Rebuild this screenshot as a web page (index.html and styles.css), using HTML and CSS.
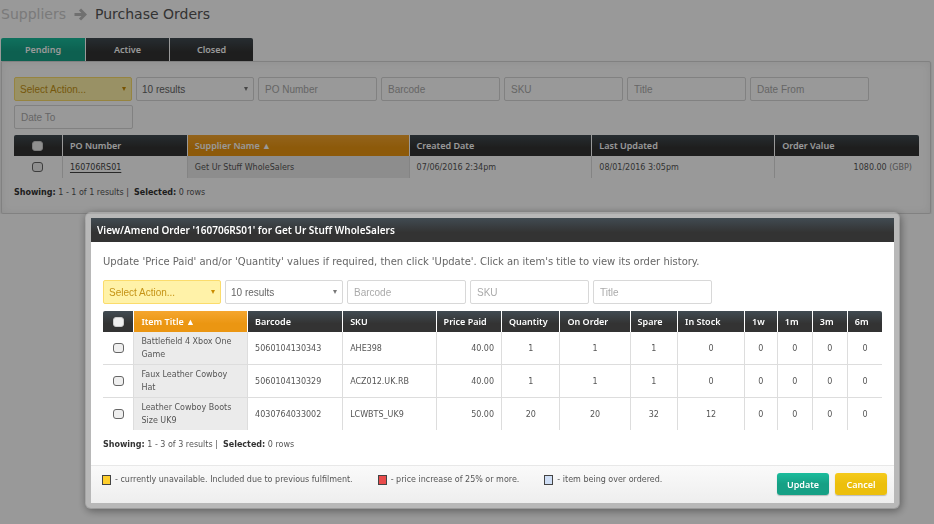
FILE: index.html
```
<!DOCTYPE html>
<html lang="en">
<head>
    <meta charset="UTF-8">
    <meta name="viewport" content="width=device-width, initial-scale=1.0">
    <title>Purchase Orders</title>
    <link rel="stylesheet" href="styles.css">
</head>
<body>
    <h1 class="page_title">
        <a href="#">Suppliers</a>
        <svg width="13" height="13" viewBox="0 0 13 13"><path d="M0.5 6.5H10M6 1.5L11 6.5L6 11.5" fill="none" stroke="currentColor" stroke-width="3"/></svg>
        Purchase Orders
    </h1>

    <div class="tabs">
        <button type="button" class="tab active">Pending</button>
        <button type="button" class="tab">Active</button>
        <button type="button" class="tab">Closed</button>
    </div>

    <div class="panel">
        <div class="filters">
            <div class="select action"><select aria-label="Action"><option>Select Action...</option></select></div>
            <div class="select"><select aria-label="Results per page"><option>10 results</option></select></div>
            <input type="text" placeholder="PO Number" aria-label="PO Number">
            <input type="text" placeholder="Barcode" aria-label="Barcode">
            <input type="text" placeholder="SKU" aria-label="SKU">
            <input type="text" placeholder="Title" aria-label="Title">
            <input type="text" placeholder="Date From" aria-label="Date From">
            <input type="text" placeholder="Date To" aria-label="Date To">
        </div>
        <table class="grid orders">
            <thead>
                <tr>
                    <th class="c_check"><input type="checkbox" aria-label="Select all orders"></th>
                    <th class="c_po">PO Number</th>
                    <th class="c_supplier sorted">Supplier Name ▲</th>
                    <th class="c_date">Created Date</th>
                    <th class="c_date">Last Updated</th>
                    <th class="c_value">Order Value</th>
                </tr>
            </thead>
            <tbody>
                <tr>
                    <td class="c_check"><input type="checkbox" aria-label="Select order 160706RS01"></td>
                    <td><a href="#">160706RS01</a></td>
                    <td class="sorted">Get Ur Stuff WholeSalers</td>
                    <td>07/06/2016 2:34pm</td>
                    <td>08/01/2016 3:05pm</td>
                    <td class="right">1080.00 <span class="currency">(GBP)</span></td>
                </tr>
            </tbody>
        </table>
        <p class="summary"><b>Showing:</b> 1 - 1 of 1 results | &nbsp;<b>Selected:</b> 0 rows</p>
    </div>

    <!-- popup -->
    <div class="overlay">
        <div class="modal" role="dialog" aria-labelledby="modal_title">
            <h2 class="modal_title" id="modal_title">View/Amend Order '160706RS01' for Get Ur Stuff WholeSalers</h2>
            <div class="modal_body">
                <p class="intro">Update 'Price Paid' and/or 'Quantity' values if required, then click 'Update'. Click an item's title to view its order history.</p>
                <div class="filters">
                    <div class="select action"><select aria-label="Item action"><option>Select Action...</option></select></div>
                    <div class="select"><select aria-label="Items per page"><option>10 results</option></select></div>
                    <input type="text" placeholder="Barcode" aria-label="Item barcode">
                    <input type="text" placeholder="SKU" aria-label="Item SKU">
                    <input type="text" placeholder="Title" aria-label="Item title">
                </div>
                <table class="grid items">
                    <colgroup>
                        <col class="i_check"><col class="i_title"><col class="i_barcode"><col class="i_sku"><col class="i_price"><col class="i_qty"><col class="i_order"><col class="i_spare"><col class="i_stock"><col class="i_week"><col class="i_month"><col class="i_month"><col class="i_month">
                    </colgroup>
                    <thead>
                        <tr>
                            <th class="c_check"><input type="checkbox" aria-label="Select all items"></th>
                            <th class="sorted">Item Title ▲</th>
                            <th>Barcode</th>
                            <th>SKU</th>
                            <th>Price Paid</th>
                            <th>Quantity</th>
                            <th>On Order</th>
                            <th>Spare</th>
                            <th>In Stock</th>
                            <th>1w</th>
                            <th>1m</th>
                            <th>3m</th>
                            <th>6m</th>
                        </tr>
                    </thead>
                    <tbody>
                        <tr>
                            <td class="c_check"><input type="checkbox" aria-label="Select Battlefield 4"></td>
                            <td class="sorted">Battlefield 4 Xbox One Game</td>
                            <td>5060104130343</td>
                            <td>AHE398</td>
                            <td class="right">40.00</td>
                            <td class="num">1</td>
                            <td class="num">1</td>
                            <td class="num">1</td>
                            <td class="num">0</td>
                            <td class="num">0</td>
                            <td class="num">0</td>
                            <td class="num">0</td>
                            <td class="num">0</td>
                        </tr>
                        <tr>
                            <td class="c_check"><input type="checkbox" aria-label="Select Cowboy Hat"></td>
                            <td class="sorted">Faux Leather Cowboy Hat</td>
                            <td>5060104130329</td>
                            <td>ACZ012.UK.RB</td>
                            <td class="right">40.00</td>
                            <td class="num">1</td>
                            <td class="num">1</td>
                            <td class="num">1</td>
                            <td class="num">0</td>
                            <td class="num">0</td>
                            <td class="num">0</td>
                            <td class="num">0</td>
                            <td class="num">0</td>
                        </tr>
                        <tr>
                            <td class="c_check"><input type="checkbox" aria-label="Select Cowboy Boots"></td>
                            <td class="sorted">Leather Cowboy Boots Size UK9</td>
                            <td>4030764033002</td>
                            <td>LCWBTS_UK9</td>
                            <td class="right">50.00</td>
                            <td class="num">20</td>
                            <td class="num">20</td>
                            <td class="num">32</td>
                            <td class="num">12</td>
                            <td class="num">0</td>
                            <td class="num">0</td>
                            <td class="num">0</td>
                            <td class="num">0</td>
                        </tr>
                    </tbody>
                </table>
                <p class="summary"><b>Showing:</b> 1 - 3 of 3 results | &nbsp;<b>Selected:</b> 0 rows</p>
            </div>
            <div class="modal_foot">
                <ul class="legend">
                    <li><i class="key yellow"></i>- currently unavailable. Included due to previous fulfilment.</li>
                    <li><i class="key red"></i>- price increase of 25% or more.</li>
                    <li><i class="key blue"></i>- item being over ordered.</li>
                </ul>
                <button type="button" class="btn update">Update</button>
                <button type="button" class="btn cancel">Cancel</button>
            </div>
        </div>
    </div>
</body>
</html>
```
FILE: styles.css
```
* {
    box-sizing: border-box;
}
body {
    margin: 0;
    padding: 4px 3px 0 1px;
    background-color: #fff;
    color: #555;
    font-family: "DejaVu Sans", Verdana, sans-serif;
    font-size: 8px;
    line-height: 13px;
}
h1, h2, p, ul {
    margin: 0;
    padding: 0;
    font-weight: normal;
}
.page_title {
    display: flex;
    align-items: center;
    gap: 8px;
    margin-bottom: 14px;
    font-size: 14px;
    line-height: 20px;
}
.page_title a {
    color: #ccc;
    text-decoration: none;
}
.page_title svg {
    color: #bbb;
}

/* tabs */
.tabs {
    display: flex;
    gap: 1px;
}
.tab {
    width: 83px;
    height: 23px;
    padding: 0;
    border: 0;
    background: linear-gradient(#414b52, #333 60%);
    color: #fff;
    font: 600 9px "Noto Sans", Tahoma, sans-serif;
}
.tab:first-child {
    width: 84px;
    border-radius: 2px 0 0 0;
}
.tab:last-child {
    border-radius: 0 2px 0 0;
}
.tab.active {
    background: linear-gradient(#1abc9c, #16a085 60%);
}
.panel {
    padding: 15px 11px 14px 12px;
    border: 1px solid #d8d8d8;
    border-radius: 0 2px 2px 2px;
    box-shadow: inset 0 0 8px #eee, 0 1px 2px #ccc;
}

/* filter boxes */
.filters {
    display: flex;
    flex-wrap: wrap;
    gap: 4px;
    margin-bottom: 6px;
}
.filters input, .filters select {
    display: block;
    height: 24px;
    border: 1px solid #d8d8d8;
    border-radius: 2px;
    background-color: #fff;
    color: #666;
    font: 10px "Liberation Sans", Arial, sans-serif;
}
.filters input {
    width: 119px;
    padding: 0 6px;
}
.filters input::placeholder {
    color: #aaa;
}
.select {
    position: relative;
    width: 118px;
}
.filters select {
    width: 100%;
    padding: 0 5px;
    appearance: none;
}
.select::after {
    content: "";
    position: absolute;
    top: 10px;
    right: 6px;
    border: 2px solid transparent;
    border-top: 4px solid #777;
    border-bottom: 0;
}
.action select {
    border-color: #fbdc6c;
    background-color: #fff2a8;
    color: #c59316;
}
.action::after {
    border-top-color: #c98b00;
}

/* tables */
.grid {
    width: 100%;
    border-collapse: separate;
    border-spacing: 0;
    table-layout: fixed;
}
.grid th {
    height: 21px;
    padding: 0 7px;
    border-left: 1px solid #fff;
    background: linear-gradient(#414b52, #333 60%);
    color: #fff;
    font: 600 9px "Noto Sans", Tahoma, sans-serif;
    text-align: left;
    white-space: nowrap;
}
.grid th.sorted {
    background: linear-gradient(#f5a62f, #eb9612 60%);
}
.grid th:first-child {
    border-left: 0;
    border-radius: 2px 0 0 0;
}
.grid th:last-child {
    border-radius: 0 2px 0 0;
}
.grid td {
    padding: 3px 7px;
    border-left: 1px solid #ddd;
}
.grid td:first-child {
    border-left: 0;
}
.grid tr + tr td {
    border-top: 1px solid #ddd;
}
.grid td.sorted {
    background-color: #ebebeb;
}
.grid a {
    color: #444;
    text-underline-offset: 2px;
}
.grid .c_check {
    padding: 0;
    text-align: center;
}
.grid input {
    display: block;
    width: 11px;
    height: 10px;
    margin: 0 auto;
    border: 1px solid #666;
    border-radius: 3px;
    background-color: #efefef;
    appearance: none;
}
.grid th input {
    border-color: #ccc;
}
.grid input:checked {
    background-color: #16a085;
}
.grid .right {
    text-align: right;
}
.grid .num {
    text-align: center;
}
.currency {
    color: #888;
}
.orders td {
    height: 22px;
}
.orders .c_check { width: 5.3%; }
.orders .c_po { width: 13.8%; }
.orders .c_supplier { width: 24.5%; }
.orders .c_date { width: 20.2%; }
.orders .c_value { width: 16%; }

.i_check { width: 3.9%; }
.i_title { width: 14.6%; }
.i_barcode { width: 12.2%; }
.i_sku { width: 12%; }
.i_price { width: 8.4%; }
.i_qty { width: 7.5%; }
.i_order { width: 9%; }
.i_spare { width: 6.1%; }
.i_stock { width: 8.6%; }
.i_week { width: 4.2%; }
.i_month { width: 4.5%; }

.summary {
    margin-top: 8px;
}
.summary b {
    color: #333;
}

/* popup */
.overlay {
    position: fixed;
    inset: 0;
    padding: 212px 34px 0 85px;
    background-color: rgba(0, 0, 0, 0.4);
}
.modal {
    border: 6px solid rgba(255, 255, 255, 0.3);
    border-radius: 6px;
    background-color: #fff;
    background-clip: padding-box;
    box-shadow: 1px 2px 8px rgba(0, 0, 0, 0.4);
}
.modal_title {
    padding: 0 6px;
    background: linear-gradient(#414b52, #333 60%);
    color: #fff;
    font: 600 10px/24px "Noto Sans", Tahoma, sans-serif;
}
.modal_body {
    padding: 12px 12px 14px;
}
.intro {
    margin-bottom: 10px;
    color: #666;
    font-size: 10px;
    line-height: 16px;
}
.modal_body .filters {
    margin-bottom: 7px;
}
.modal_foot {
    display: flex;
    align-items: flex-start;
    gap: 6px;
    padding: 7px 7px 8px 11px;
    border-top: 1px solid #e8e8e8;
    background: linear-gradient(#fafafa, #eee);
}
.legend {
    display: flex;
    flex: 1;
    gap: 25px;
    list-style: none;
}
.legend li {
    display: flex;
    align-items: center;
    gap: 4px;
}
.key {
    width: 9px;
    height: 10px;
    border: 1px solid #444;
}
.yellow { background-color: #ffcf2c; }
.red { background-color: #e94b4b; }
.blue { background-color: #cfdef5; }
.btn {
    width: 52px;
    height: 22px;
    padding: 0;
    border: 0;
    border-radius: 3px;
    box-shadow: 0 1px 1px #bbb;
    color: #fff;
    font: 600 9px "Noto Sans", Tahoma, sans-serif;
}
.update {
    background: linear-gradient(#1abc9c, #16a085 50%);
}
.cancel {
    background: linear-gradient(#f5ca1c, #ecbf0c 50%);
}
```
